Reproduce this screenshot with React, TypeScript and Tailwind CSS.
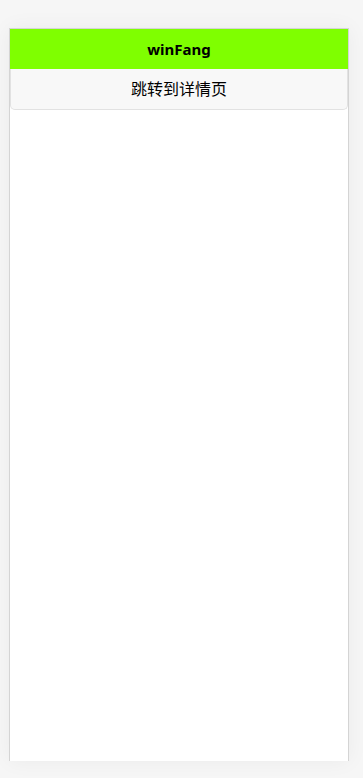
import React from 'react';

const App: React.FC = () => {
  return (
    <div
      className="w-[363px] h-[778px] bg-[#f6f6f6] pt-[28px] pl-[9px] overflow-hidden"
      style={{ fontFamily: '"Noto Sans", "Noto Sans CJK SC", sans-serif' }}
    >
      {/* Phone frame */}
      <div className="w-[340px] h-[733px] bg-white border border-[#d4d4d4] border-b-0 shadow-[0_0_20px_rgba(0,0,0,0.05)] flex flex-col">
        <div className="h-[40px] shrink-0 bg-[#7fff00] flex items-center justify-center text-[15px] font-bold text-black">
          winFang
        </div>
        <button className="h-[41px] shrink-0 bg-[#f8f8f8] border border-[#e2e2e2] border-t-0 rounded-b-[5px] flex items-center justify-center text-[16px] text-black">
          跳转到详情页
        </button>
        <div className="flex-1" />
      </div>
    </div>
  );
};

export default App;
